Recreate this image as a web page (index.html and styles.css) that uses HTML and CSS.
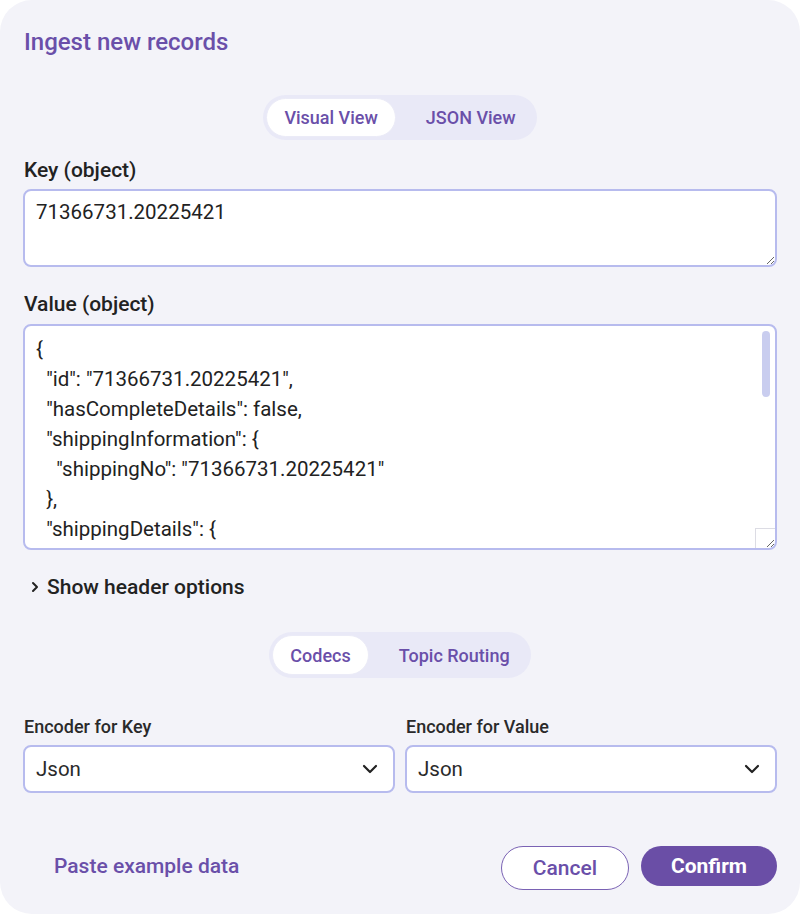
FILE: index.html
```html
<!DOCTYPE html>
<html lang="en">
<head>
<meta charset="utf-8">
<title>Ingest new records</title>
<link rel="stylesheet" href="styles.css">
</head>
<body>
<div class="dialog">
  <h1 class="title">Ingest new records</h1>

  <div class="toggle-row toggle-row--top">
    <div class="toggle">
      <button class="toggle-btn is-active">Visual View</button>
      <button class="toggle-btn">JSON View</button>
    </div>
  </div>

  <label class="field-label field-label--key">Key (object)</label>
  <textarea class="input input--key" spellcheck="false">71366731.20225421</textarea>

  <label class="field-label field-label--value">Value (object)</label>
  <div class="code-wrap">
    <textarea class="input input--value" spellcheck="false">{
  "id": "71366731.20225421",
  "hasCompleteDetails": false,
  "shippingInformation": {
    "shippingNo": "71366731.20225421"
  },
  "shippingDetails": {
    "shippingNo": "71366731.20225421",
    "carrier": "DHL",
    "status": "IN_TRANSIT",
    "weight": 12.5,
    "origin": "Berlin",
    "destination": "Munich"
  },
  "customer": {
    "name": "Jane Doe",
    "email": "jane.doe@example.com"
  },
  "items": [
    { "sku": "A-100", "qty": 2 },
    { "sku": "B-200", "qty": 1 }
  ],
  "createdAt": "2024-01-01T10:00:00Z"
}</textarea>
    <div class="scroll-thumb"></div>
    <div class="scroll-corner"></div>
  </div>

  <div class="expander">
    <svg class="expander-icon" width="10" height="12" viewBox="0 0 10 12"><polyline points="3,2 7,6 3,10" fill="none" stroke="#222" stroke-width="2" stroke-linecap="round" stroke-linejoin="round"/></svg>
    <span>Show header options</span>
  </div>

  <div class="toggle-row toggle-row--bottom">
    <div class="toggle toggle--tall">
      <button class="toggle-btn is-active">Codecs</button>
      <button class="toggle-btn">Topic Routing</button>
    </div>
  </div>

  <div class="encoders">
    <div class="encoder">
      <label class="enc-label">Encoder for Key</label>
      <div class="select">
        <span>Json</span>
        <svg width="18" height="12" viewBox="0 0 18 12"><polyline points="3,3 9,9 15,3" fill="none" stroke="#222" stroke-width="2.2" stroke-linecap="round" stroke-linejoin="round"/></svg>
      </div>
    </div>
    <div class="encoder">
      <label class="enc-label">Encoder for Value</label>
      <div class="select">
        <span>Json</span>
        <svg width="18" height="12" viewBox="0 0 18 12"><polyline points="3,3 9,9 15,3" fill="none" stroke="#222" stroke-width="2.2" stroke-linecap="round" stroke-linejoin="round"/></svg>
      </div>
    </div>
  </div>

  <div class="footer">
    <button class="link-btn">Paste example data</button>
    <div class="actions">
      <button class="btn btn--outline">Cancel</button>
      <button class="btn btn--primary">Confirm</button>
    </div>
  </div>
</div>
</body>
</html>
```

FILE: styles.css
```css
* { box-sizing: border-box; }

html, body {
  margin: 0;
  padding: 0;
  background: #ffffff;
}

body {
  font-family: Roboto, "Liberation Sans", Arial, sans-serif;
  color: #222222;
}

.dialog {
  width: 800px;
  height: 914px;
  background: #f3f3f9;
  border-radius: 32px;
  padding: 28px 23px 0 23px;
  display: flex;
  flex-direction: column;
}

.title {
  margin: 0;
  padding-left: 1px;
  font-size: 24px;
  line-height: 28px;
  font-weight: 500;
  color: #6a4fa9;
}

.toggle-row {
  display: flex;
  justify-content: center;
}

.toggle-row--top { margin-top: 39px; }
.toggle-row--bottom { margin-top: 33px; }

.toggle {
  display: flex;
  gap: 12px;
  padding: 3px;
  background: #e9e9f7;
  border-radius: 24px;
  height: 45px;
}

.toggle--tall { height: 46px; }

.toggle-btn {
  border: 1px solid transparent;
  background: transparent;
  border-radius: 20px;
  padding: 0 17px;
  font-family: inherit;
  font-size: 18px;
  font-weight: 500;
  color: #6a4fa9;
  cursor: pointer;
}

.toggle-btn.is-active {
  background: #ffffff;
  border-color: #ebebf7;
}

.field-label {
  display: block;
  padding-left: 1px;
  font-size: 21px;
  line-height: 22px;
  font-weight: 500;
  color: #222222;
}

.field-label--key { margin-top: 19px; margin-bottom: 8px; }
.field-label--value { margin-top: 26px; margin-bottom: 9px; }

.input {
  display: block;
  width: 100%;
  border: 2px solid #b7bbee;
  border-radius: 8px;
  background: #ffffff;
  font-family: Roboto, "Liberation Sans", Arial, sans-serif;
  font-size: 20.5px;
  line-height: 30px;
  color: #222222;
  padding: 6px 11px;
  resize: vertical;
  outline: none;
}

.input--key { height: 78px; }

.code-wrap {
  position: relative;
}

.input--value {
  height: 226px;
  padding-top: 8px;
  white-space: pre;
  overflow: hidden;
}

.scroll-thumb {
  position: absolute;
  top: 7px;
  right: 7px;
  width: 8px;
  height: 66px;
  border-radius: 4px;
  background: #c9cdef;
  pointer-events: none;
}

.scroll-corner {
  position: absolute;
  right: 2px;
  bottom: 2px;
  width: 20px;
  height: 20px;
  border-left: 1px solid #dcdce4;
  border-top: 1px solid #dcdce4;
  pointer-events: none;
}

.expander {
  margin-top: 25px;
  display: flex;
  align-items: center;
  gap: 7px;
  padding-left: 7px;
  font-size: 21px;
  line-height: 24px;
  font-weight: 500;
  color: #222222;
}

.expander-icon { flex: none; }

.encoders {
  margin-top: 39px;
  display: grid;
  grid-template-columns: 1fr 1fr;
  gap: 10px;
}

.enc-label {
  display: block;
  padding-left: 1px;
  font-size: 18px;
  line-height: 20px;
  font-weight: 500;
  color: #2a2a2a;
  margin-bottom: 8px;
}

.select {
  height: 48px;
  border: 2px solid #b7bbee;
  border-radius: 8px;
  background: #ffffff;
  display: flex;
  align-items: center;
  justify-content: space-between;
  padding: 0 14px 0 11px;
  font-size: 20.5px;
  color: #2a2a2a;
}

.footer {
  margin-top: 53px;
  display: flex;
  justify-content: space-between;
  align-items: flex-start;
}

.link-btn {
  margin-top: 8px;
  margin-left: 31px;
  border: none;
  background: transparent;
  padding: 0;
  font-family: inherit;
  font-size: 21px;
  line-height: 24px;
  font-weight: 500;
  color: #6a4fa9;
  cursor: pointer;
}

.actions {
  display: flex;
  gap: 12px;
  align-items: flex-start;
}

.btn {
  font-family: inherit;
  font-size: 21px;
  border-radius: 24px;
  cursor: pointer;
}

.btn--outline {
  width: 128px;
  height: 44px;
  background: #ffffff;
  border: 1px solid #7a62b4;
  color: #6a4fa9;
  font-weight: 500;
}

.btn--primary {
  width: 136px;
  height: 40px;
  background: #6a4ea6;
  border: none;
  color: #ffffff;
  font-weight: 700;
}
```
